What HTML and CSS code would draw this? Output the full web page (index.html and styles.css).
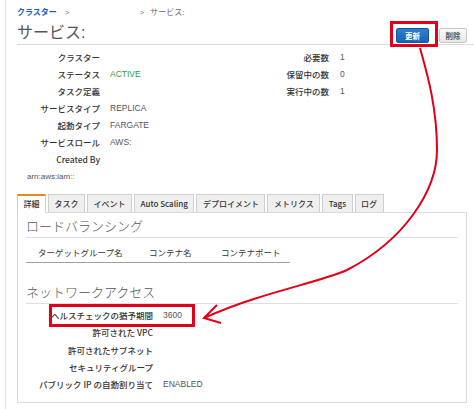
FILE: index.html
```html
<!DOCTYPE html>
<html lang="ja">
<head>
<meta charset="utf-8">
<title>サービス</title>
<link rel="stylesheet" href="styles.css">
</head>
<body>
<div class="page">
  <nav class="crumbs">
    <a class="crumb-link">クラスター</a><span class="sep">&gt;</span><span class="redacted"></span><span class="sep">&gt;</span><span class="crumb-cur">サービス:</span>
  </nav>
  <header class="head">
    <h1 class="title">サービス:</h1>
    <div class="actions">
      <button class="btn btn-primary">更新</button>
      <button class="btn">削除</button>
    </div>
  </header>
  <section class="summary">
    <dl class="grid grid-left">
      <dt>クラスター</dt><dd></dd>
      <dt>ステータス</dt><dd class="ok">ACTIVE</dd>
      <dt>タスク定義</dt><dd></dd>
      <dt>サービスタイプ</dt><dd>REPLICA</dd>
      <dt>起動タイプ</dt><dd>FARGATE</dd>
      <dt>サービスロール</dt><dd>AWS:</dd>
      <dt>Created By</dt><dd></dd>
    </dl>
    <dl class="grid grid-right">
      <dt>必要数</dt><dd>1</dd>
      <dt>保留中の数</dt><dd>0</dd>
      <dt>実行中の数</dt><dd>1</dd>
    </dl>
  </section>
  <div class="arn">arn:aws:iam::</div>
  <ul class="tabs">
    <li class="tab active">詳細</li>
    <li class="tab">タスク</li>
    <li class="tab">イベント</li>
    <li class="tab">Auto Scaling</li>
    <li class="tab">デプロイメント</li>
    <li class="tab">メトリクス</li>
    <li class="tab">Tags</li>
    <li class="tab">ログ</li>
  </ul>
  <div class="panel">
    <h2 class="sec">ロードバランシング</h2>
    <div class="lbtable">
      <span class="c1">ターゲットグループ名</span><span class="c2">コンテナ名</span><span class="c3">コンテナポート</span>
    </div>
    <h2 class="sec sec2">ネットワークアクセス</h2>
    <dl class="grid grid-net">
      <dt>ヘルスチェックの猶予期間</dt><dd>3600</dd>
      <dt>許可された VPC</dt><dd></dd>
      <dt>許可されたサブネット</dt><dd></dd>
      <dt>セキュリティグループ</dt><dd></dd>
      <dt>パブリック IP の自動割り当て</dt><dd>ENABLED</dd>
    </dl>
  </div>
  <svg class="annot" width="474" height="409" viewBox="0 0 474 409">
    <rect x="391.5" y="22.5" width="45" height="23" fill="none" stroke="#e1001a" stroke-width="3"/>
    <rect x="50.5" y="305.5" width="143" height="20" fill="none" stroke="#e1001a" stroke-width="3"/>
    <path d="M420,48 C426,70 437,105 437,150 C437,190 405,240 347,270 C318,283 262,292 204,318" fill="none" stroke="#e1001a" stroke-width="2"/>
    <path d="M217,305 L204,318 L221,323" fill="none" stroke="#e1001a" stroke-width="2"/>
  </svg>
</div>
</body>
</html>
```
FILE: styles.css
```css
* { box-sizing: border-box; }
html, body { margin: 0; padding: 0; background: #fff; }
body {
  font-family: "Liberation Sans", "Noto Sans CJK JP", sans-serif;
  color: #444;
  width: 474px;
  height: 409px;
  overflow: hidden;
}
.page {
  position: relative;
  margin-left: 5px;
  border-left: 1px solid #e2e2e2;
  padding-left: 11px;
  height: 409px;
}
.crumbs {
  height: 26px;
  line-height: 26px;
  font-size: 8px;
  color: #555;
  display: flex;
}
.crumb-link { color: #1b5fae; font-weight: bold; }
.sep { margin-left: 8px; color: #777; }
.redacted { width: 62px; }
.crumb-cur { margin-left: 6px; color: #666; }
.head {
  display: flex;
  align-items: center;
  height: 19px;
  border-bottom: 1px solid #dcdcdc;
}
.title {
  margin: 0;
  font-size: 16px;
  font-weight: normal;
  line-height: 18px;
  color: #555;
  position: relative;
  top: -2px;
}
.actions { margin-left: auto; margin-right: 7px; display: flex; gap: 10px; }
.btn {
  height: 15px;
  width: 28px;
  padding: 0;
  font-family: "Noto Sans CJK JP", sans-serif;
  font-size: 7.5px;
  font-weight: bold;
  line-height: 13px;
  color: #555;
  background: linear-gradient(#fafafa, #e8e8e8);
  border: 1px solid #c8c8c8;
  border-radius: 2px;
}
.btn-primary {
  width: 33px;
  color: #fff;
  background: linear-gradient(#2f80d1, #1a63b3);
  border-color: #155499;
}
.summary { display: flex; align-items: flex-start; margin-top: 4px; }
.grid {
  display: grid;
  margin: 0;
  line-height: 17px;
  font-size: 8.5px;
  align-content: start;
}
.grid dt {
  text-align: right;
  font-family: "Noto Sans CJK JP", sans-serif;
  font-weight: 500;
  color: #333;
  white-space: nowrap;
}
.grid dd { margin: 0; color: #555; min-height: 17px; }
.grid dd.ok { color: #2f9b3c; }
.grid-left { grid-template-columns: 83px 1fr; column-gap: 10px; width: 233px; }
.grid-right { grid-template-columns: 79px 1fr; column-gap: 11px; }
.arn {
  line-height: 17px;
  font-size: 8px;
  color: #555;
  padding-left: 10px;
}
.tabs {
  list-style: none;
  margin: 9px 0 0 0;
  padding: 0;
  display: flex;
  gap: 2px;
  height: 18px;
}
.tab {
  font-size: 8px;
  font-weight: 500;
  line-height: 17px;
  padding: 0 5.5px;
  color: #333;
  background: #efefef;
  border: 1px solid #cfcfcf;
  border-bottom: none;
  font-family: "Noto Sans CJK JP", sans-serif;
}
.tab.active {
  background: #fff;
  border-top: 2px solid #e38b20;
  line-height: 16px;
  position: relative;
  margin-bottom: -1px;
  height: 19px;
}
.panel {
  border: 1px solid #dcdcdc;
  margin-right: 7px;
  padding: 0 8px 10px 8px;
  height: 191px;
}
.sec {
  margin: 0;
  font-family: "Noto Sans CJK JP", sans-serif;
  font-size: 13px;
  font-weight: 300;
  line-height: 16px;
  color: #555;
  padding: 5px 0 3px 0;
  border-bottom: 1px solid #dedede;
}
.sec2 { margin-top: 17px; padding-top: 4px; }
.lbtable {
  width: 264px;
  display: flex;
  font-family: "Noto Sans CJK JP", sans-serif;
  font-size: 8.5px;
  line-height: 12px;
  padding: 8px 0 4px 12px;
  border-bottom: 1px solid #a0a0a0;
  color: #333;
}
.c1 { width: 111px; }
.c2 { width: 72px; }
.grid-net { grid-template-columns: 127px 1fr; column-gap: 10px; margin-top: 3px; line-height: 17.3px; }
.annot { position: absolute; left: -6px; top: 0; pointer-events: none; }
```
